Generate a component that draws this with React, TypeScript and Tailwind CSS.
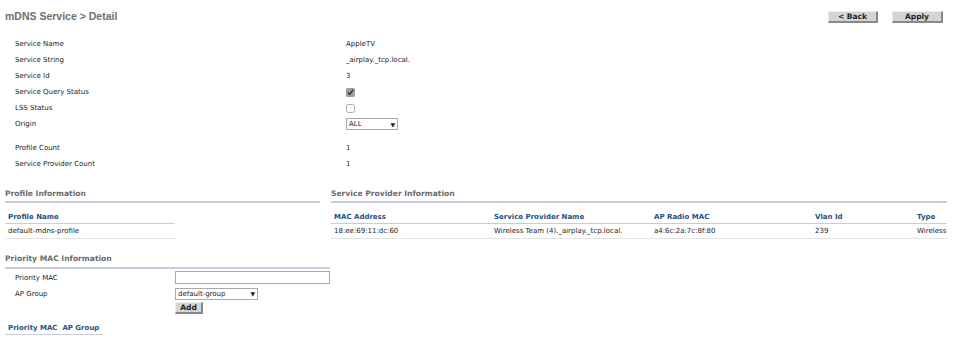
import React from 'react';

const font = "font-['DejaVu_Sans',Verdana,sans-serif]";

const rows: [string, React.ReactNode][] = [
  ['Service Name', 'AppleTV'],
  ['Service String', '_airplay._tcp.local.'],
  ['Service Id', '3'],
  ['Service Query Status', <input type="checkbox" defaultChecked className="m-0 h-[9px] w-[9px] accent-gray-400" />],
  ['LSS Status', <input type="checkbox" className="m-0 h-[9px] w-[9px] opacity-60" />],
];

const Select: React.FC<{ value: string; w: string }> = ({ value, w }) => (
  <div className={`flex h-[12px] ${w} items-center justify-between border border-[#a9a9a9] bg-white px-[2px] text-[7px] text-[#222]`}>
    <span>{value}</span>
    <span className="text-[6px]">▼</span>
  </div>
);

const Btn: React.FC<{ label: string; w: string }> = ({ label, w }) => (
  <button
    className={`${w} h-[12px] border-b-2 border-r-2 border-[#888] border-t border-l border-t-[#eee] border-l-[#eee] bg-[#d4d4d4] text-[7.5px] font-bold leading-none text-[#222]`}
  >
    {label}
  </button>
);

const SectionHead: React.FC<{ title: string; className?: string }> = ({ title, className }) => (
  <div className={`border-b-2 border-[#c8cbdb] pb-[2px] text-[7.6px] font-bold text-[#6b6b6b] ${className ?? ''}`}>
    {title}
  </div>
);

const th = 'text-[7px] font-bold text-[#1e4f82]';

export default function App() {
  return (
    <div className={`${font} h-[341px] w-[954px] bg-white text-[7px] text-[#222]`}>
      <div className="flex items-start justify-between pl-[5px] pr-[11px] pt-[9px]">
        <h1 className="font-['Liberation_Sans',Arial,sans-serif] text-[10.5px] font-bold leading-[14px] text-[#6f6f6f]">mDNS Service &gt; Detail</h1>
        <div className="flex gap-[14px] pt-[2px]">
          <Btn label="< Back" w="w-[50px]" />
          <Btn label="Apply" w="w-[51px]" />
        </div>
      </div>

      <div className="mt-[13px] pl-[15px]">
        {rows.map(([k, v]) => (
          <div key={k} className="flex h-[16px] items-center">
            <div className="w-[331px]">{k}</div>
            <div className="flex items-center">{v}</div>
          </div>
        ))}
        <div className="flex h-[16px] items-center">
          <div className="w-[331px]">Origin</div>
          <Select value="ALL" w="w-[52px]" />
        </div>
        <div className="h-[8px]" />
        <div className="flex h-[16px] items-center">
          <div className="w-[331px]">Profile Count</div>
          <div>1</div>
        </div>
        <div className="flex h-[16px] items-center">
          <div className="w-[331px]">Service Provider Count</div>
          <div>1</div>
        </div>
      </div>

      <div className="mt-[16px] flex pl-[5px] pr-[7px]">
        <div className="w-[315px]">
          <SectionHead title="Profile Information" />
          <div className="mt-[9px] w-[170px]">
            <div className={`border-b border-[#c8cbdb] pb-[1px] pl-[3px] leading-[10px] ${th}`}>Profile Name</div>
            <div className="border-b border-[#e4e4e4] pb-[2px] pt-[3px] pl-[3px] leading-[9px]">default-mdns-profile</div>
          </div>
        </div>
        <div className="ml-[11px] flex-1">
          <SectionHead title="Service Provider Information" />
          <div className="mt-[9px]">
            <div className="grid grid-cols-[160px_160px_161px_102px_1fr] border-b border-[#c8cbdb] pb-[1px] pl-[3px] leading-[10px]">
              <div className={th}>MAC Address</div>
              <div className={th}>Service Provider Name</div>
              <div className={th}>AP Radio MAC</div>
              <div className={th}>Vlan Id</div>
              <div className={th}>Type</div>
            </div>
            <div className="grid grid-cols-[160px_160px_161px_102px_1fr] border-b border-[#e4e4e4] pb-[2px] pt-[3px] pl-[3px] leading-[9px]">
              <div>18:ee:69:11:dc:60</div>
              <div>Wireless Team (4)._airplay._tcp.local.</div>
              <div>a4:6c:2a:7c:8f:80</div>
              <div>239</div>
              <div>Wireless</div>
            </div>
          </div>
        </div>
      </div>

      <div className="mt-[14px] w-[330px] pl-[5px]">
        <SectionHead title="Priority MAC Information" />
        <div className="mt-[1px] pl-[10px]">
          <div className="flex h-[16px] items-center">
            <div className="w-[160px]">Priority MAC</div>
            <div className="h-[13px] w-[155px] border border-[#a9a9a9] bg-white" />
          </div>
          <div className="flex h-[16px] items-center">
            <div className="w-[160px]">AP Group</div>
            <Select value="default-group" w="w-[83px]" />
          </div>
          <div className="ml-[160px] flex">
            <Btn label="Add" w="w-[28px]" />
          </div>
        </div>
        <div className={`mt-[9px] w-[98px] border-b border-[#c8cbdb] pb-[1px] pl-[3px] leading-[10px] ${th}`}>
          Priority MAC&nbsp;&nbsp;AP Group
        </div>
      </div>
    </div>
  );
}
